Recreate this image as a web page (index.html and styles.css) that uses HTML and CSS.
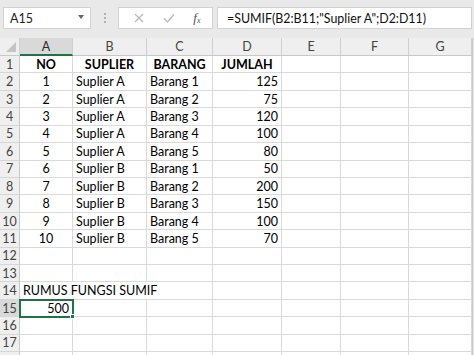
FILE: index.html
```html
<!DOCTYPE html>
<html>
<head>
<meta charset="utf-8">
<link rel="stylesheet" href="styles.css">
</head>
<body>
<div class="app">
  <div class="fbar">
    <div class="namebox"><span>A15</span><span class="caret"></span></div>
    <div class="grip"><i></i><i></i><i></i></div>
    <div class="btns">
      <svg class="ico" width="12" height="12" viewBox="0 0 12 12"><path d="M2 2L10 10M10 2L2 10" stroke="#b9b9b9" stroke-width="1.3" fill="none"/></svg>
      <svg class="ico" width="14" height="12" viewBox="0 0 14 12"><path d="M2 6.5L5.5 10L12 2.5" stroke="#b9b9b9" stroke-width="1.3" fill="none"/></svg>
      <span class="fx">f<sub>x</sub></span>
    </div>
    <div class="formula">=SUMIF(B2:B11;"Suplier A";D2:D11)</div>
  </div>
  <div class="sheet">
    <div class="grid">
      <div class="ch corner"><span class="tri"></span></div>
      <div class="ch sel-col">A</div>
      <div class="ch">B</div>
      <div class="ch">C</div>
      <div class="ch">D</div>
      <div class="ch">E</div>
      <div class="ch">F</div>
      <div class="ch">G</div>

      <div class="rh">1</div><div class="c b ctr">NO</div><div class="c b ctr">SUPLIER</div><div class="c b ctr">BARANG</div><div class="c b ctr">JUMLAH</div><div class="c"></div><div class="c"></div><div class="c"></div>
      <div class="rh">2</div><div class="c ctr">1</div><div class="c">Suplier A</div><div class="c">Barang 1</div><div class="c r">125</div><div class="c"></div><div class="c"></div><div class="c"></div>
      <div class="rh">3</div><div class="c ctr">2</div><div class="c">Suplier A</div><div class="c">Barang 2</div><div class="c r">75</div><div class="c"></div><div class="c"></div><div class="c"></div>
      <div class="rh">4</div><div class="c ctr">3</div><div class="c">Suplier A</div><div class="c">Barang 3</div><div class="c r">120</div><div class="c"></div><div class="c"></div><div class="c"></div>
      <div class="rh">5</div><div class="c ctr">4</div><div class="c">Suplier A</div><div class="c">Barang 4</div><div class="c r">100</div><div class="c"></div><div class="c"></div><div class="c"></div>
      <div class="rh">6</div><div class="c ctr">5</div><div class="c">Suplier A</div><div class="c">Barang 5</div><div class="c r">80</div><div class="c"></div><div class="c"></div><div class="c"></div>
      <div class="rh">7</div><div class="c ctr">6</div><div class="c">Suplier B</div><div class="c">Barang 1</div><div class="c r">50</div><div class="c"></div><div class="c"></div><div class="c"></div>
      <div class="rh">8</div><div class="c ctr">7</div><div class="c">Suplier B</div><div class="c">Barang 2</div><div class="c r">200</div><div class="c"></div><div class="c"></div><div class="c"></div>
      <div class="rh">9</div><div class="c ctr">8</div><div class="c">Suplier B</div><div class="c">Barang 3</div><div class="c r">150</div><div class="c"></div><div class="c"></div><div class="c"></div>
      <div class="rh">10</div><div class="c ctr">9</div><div class="c">Suplier B</div><div class="c">Barang 4</div><div class="c r">100</div><div class="c"></div><div class="c"></div><div class="c"></div>
      <div class="rh">11</div><div class="c ctr">10</div><div class="c">Suplier B</div><div class="c">Barang 5</div><div class="c r">70</div><div class="c"></div><div class="c"></div><div class="c"></div>
      <div class="rh">12</div><div class="c"></div><div class="c"></div><div class="c"></div><div class="c"></div><div class="c"></div><div class="c"></div><div class="c"></div>
      <div class="rh">13</div><div class="c"></div><div class="c"></div><div class="c"></div><div class="c"></div><div class="c"></div><div class="c"></div><div class="c"></div>
      <div class="rh">14</div><div class="c span3">RUMUS FUNGSI SUMIF</div><div class="c"></div><div class="c"></div><div class="c"></div><div class="c"></div>
      <div class="rh sel-row">15</div><div class="c r active">500<span class="handle"></span></div><div class="c"></div><div class="c"></div><div class="c"></div><div class="c"></div><div class="c"></div><div class="c"></div>
      <div class="rh">16</div><div class="c"></div><div class="c"></div><div class="c"></div><div class="c"></div><div class="c"></div><div class="c"></div><div class="c"></div>
      <div class="rh">17</div><div class="c"></div><div class="c"></div><div class="c"></div><div class="c"></div><div class="c"></div><div class="c"></div><div class="c"></div>
      <div class="rh"></div><div class="c"></div><div class="c"></div><div class="c"></div><div class="c"></div><div class="c"></div><div class="c"></div><div class="c"></div>
    </div>
    <div class="edge"></div>
  </div>
</div>
</body>
</html>
```
FILE: styles.css
```css
* { box-sizing: border-box; }
html, body { margin: 0; padding: 0; }
body {
  width: 474px;
  height: 355px;
  overflow: hidden;
  background: #e9e9e9;
  font-family: Lato, "Open Sans", sans-serif;
  color: #000;
}
.app { width: 474px; height: 355px; overflow: hidden; }
.fbar {
  height: 38px;
  display: flex;
  align-items: flex-start;
  padding: 7px 2px 0 3px;
  background: #e9e9e9;
}
.namebox {
  width: 88px;
  height: 22px;
  background: #fff;
  border: 1px solid #d2d2d2;
  display: flex;
  align-items: center;
  justify-content: space-between;
  padding: 0 6px 0 6px;
  font-size: 12.5px;
  color: #222;
}
.caret {
  width: 0; height: 0;
  border-left: 3.5px solid transparent;
  border-right: 3.5px solid transparent;
  border-top: 4px solid #666;
  margin-top: -3px;
}
.grip {
  width: 27px;
  height: 22px;
  display: flex;
  flex-direction: column;
  align-items: center;
  justify-content: center;
  gap: 2px;
}
.grip i { display: block; width: 2px; height: 2px; background: #b0b0b0; }
.btns {
  width: 95px;
  height: 22px;
  background: #fff;
  border: 1px solid #d2d2d2;
  display: flex;
  align-items: center;
  justify-content: space-around;
  padding: 0 3px 0 6px;
}
.fx {
  font-family: "Liberation Serif", serif;
  font-style: italic;
  font-size: 13px;
  color: #555;
  line-height: 1;
}
.fx sub { font-size: 8px; vertical-align: -1px; }
.formula {
  flex: 1;
  margin-left: 4px;
  height: 22px;
  background: #fff;
  border: 1px solid #d2d2d2;
  padding: 0 0 0 9px;
  display: flex;
  align-items: center;
  font-size: 12.4px;
  color: #111;
  white-space: nowrap;
}
.sheet { display: flex; background: #fff; }
.grid {
  display: grid;
  grid-template-columns: 20px 53px 74px 66px 69px 59px 68px 63px;
  grid-template-rows: 18px;
  grid-auto-rows: 17.43px;
  position: relative;
  font-size: 12.5px;
}
.edge { flex: 1; background: #e9e9e9; border-left: 1px solid #c8c8c8; }
.ch {
  background: #efefef;
  border-right: 1px solid #cfcfcf;
  border-bottom: 1px solid #c8c8c8;
  display: flex;
  align-items: center;
  justify-content: center;
  color: #444;
  font-size: 12.5px;
}
.corner { position: relative; }
.tri {
  position: absolute;
  right: 3px;
  bottom: 3px;
  width: 0; height: 0;
  border-left: 10px solid transparent;
  border-bottom: 10px solid #c4c4c4;
}
.sel-col {
  background: #d9d9d9;
  border-bottom: 2px solid #217346;
  color: #2a2a2a;
}
.rh {
  background: #efefef;
  border-right: 1px solid #c8c8c8;
  border-bottom: 1px solid #d6d6d6;
  display: flex;
  align-items: center;
  justify-content: center;
  color: #444;
  font-size: 12.5px;
}
.sel-row { background: #d9d9d9; }
.c {
  border-right: 1px solid #dadada;
  border-bottom: 1px solid #dadada;
  display: flex;
  align-items: center;
  padding: 0 3px;
  white-space: nowrap;
  background: #fff;
}
.ctr { justify-content: center; }
.r { justify-content: flex-end; }
.b { font-weight: 700; }
.span3 { grid-column: span 3; }
.active {
  position: relative;
  outline: 2px solid #217346;
  outline-offset: -1px;
  z-index: 1;
}
.handle {
  position: absolute;
  right: -3px;
  bottom: -3px;
  width: 5px;
  height: 5px;
  background: #217346;
  border: 1px solid #fff;
}
```
